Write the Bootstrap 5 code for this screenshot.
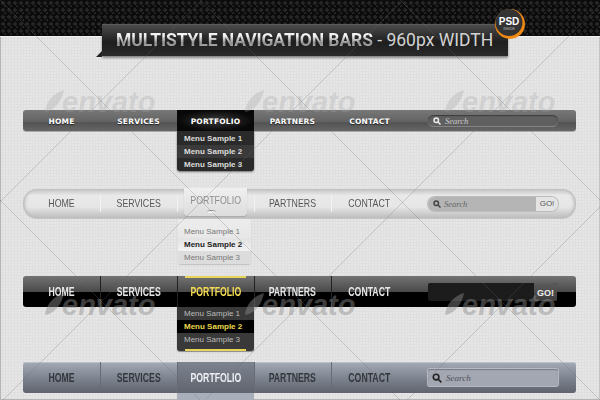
<!DOCTYPE html>
<html lang="en">
<head>
<meta charset="UTF-8">
<title>Multistyle Navigation Bars</title>
<link href="https://cdn.jsdelivr.net/npm/bootstrap@5.3.0/dist/css/bootstrap.min.css" rel="stylesheet">
<style>
html, body { margin: 0; width: 600px; height: 400px; overflow: hidden; }
body { font-family: "Liberation Sans", Arial, sans-serif; background: #e0e0e0; }
.sheet { width: 600px; height: 400px; overflow: hidden;
  background-color: #dfdfdf;
  background-image: radial-gradient(circle at 1px 1px, rgba(255,255,255,.22) 0 1px, transparent 1.2px);
  background-size: 3px 3px;
  box-shadow: inset 1px 0 #b5b5b5, inset -1px 0 #c4c4c4, inset 0 -1px #b5b5b5; }
.top-band { height: 37px; border-bottom: 1px solid #f4f4f4; background-color: #0c0c0c;
  background-image: radial-gradient(circle at 3px 3px, #262626 0 1.5px, transparent 2.1px), radial-gradient(circle at 6px 6.5px, #262626 0 1.5px, transparent 2.1px);
  background-size: 6px 7px; }
.ribbon { width: 406px; height: 32px; margin: -13px 0 54px 102px; background: linear-gradient(#4b4b4b, #1e1e1e 55%, #2a2a2a); border-top: 1px solid #5a5a5a; box-shadow: 0 2px 2px rgba(0,0,0,.4); padding-left: 14px; white-space: nowrap; color: #d4d4d4; font: 17.5px/31px Roboto, sans-serif; }
.ribbon-fold { left: -6px; bottom: -1px; border-top: 6px solid transparent; border-right: 6px solid #222; }
.ribbon-strong { font-weight: 700; letter-spacing: -.08px; background: linear-gradient(#f2f2f2 30%, #8e8e8e 65%, #c2c2c2); -webkit-background-clip: text; background-clip: text; color: transparent; }
.psd-badge { right: -18px; top: -17px; width: 32px; height: 32px; }
.navstack { padding-left: 23px; }
.nav-strip { width: 553px; flex-wrap: nowrap; }
.nav-strip .nav-item { width: 77px; flex: none; }
.nav-strip .nav-link { padding: 0; height: 100%; display: flex; align-items: center; justify-content: center; white-space: nowrap; }
.nav-strip .dropdown-menu { position: absolute; display: block; min-width: 0; padding: 0; margin: 0; border: 0; border-radius: 0 0 3px 3px; z-index: 5; font-size: 8px; left: 0; top: 100%; width: 77px; }
.nav-strip .dropdown-item { height: 13px; line-height: 13px; padding: 0 0 0 7px; font-weight: 700; white-space: nowrap; }
.squeeze { display: inline-block; transform: scaleX(.67); }
.find-slot { flex: 1; display: flex; align-items: center; padding-left: 20px; }
.find-box { width: 130px; display: flex; align-items: center; font: italic 8.5px "Liberation Serif", serif; white-space: nowrap; }
.find-box svg { flex: none; }

.strip-one { height: 21px; margin-bottom: 58px; border-radius: 3px; background: linear-gradient(#787878, #636363 55%, #535353 60%, #666); box-shadow: 0 1px 0 #aaa; }
.strip-one .nav-link { padding-top: 1px; color: #fff; font: 700 7.5px "DejaVu Sans", sans-serif; letter-spacing: .2px; text-shadow: 0 1px 1px #222; }
.strip-one .picked { background: radial-gradient(ellipse at center, #3b3b3b, #080808 70%); }
.strip-one .dropdown-menu { background: #2a2a2a; height: 40px; padding-top: 1px; box-shadow: 0 1px 2px rgba(0,0,0,.5); }
.strip-one .dropdown-item { color: #ddd; }
.strip-one .dropdown-item:nth-child(2) { background: #3a3a3a; }
.strip-one .find-box { height: 11px; padding-left: 5px; gap: 4px; border-radius: 6px; background: #5f5f5f; box-shadow: inset 0 1px 1px #3e3e3e, 0 1px 0 #858585; color: #ccc; }

.strip-two { height: 29px; margin-bottom: 58px; border-radius: 14px; background: linear-gradient(#c2c2c2, #e9e9e9 22%, #e6e6e6 62%, #bdbdbd); box-shadow: inset 3px 0 3px -1px #bbb, inset -3px 0 3px -1px #bbb, 0 1px 0 #c4c4c4; }
.strip-two .nav-item + .nav-item { background: linear-gradient(#f2f2f2, #f2f2f2) left center / 1px 17px no-repeat; }
.strip-two .nav-link { color: #565656; font-size: 11px; }
.strip-two .squeeze { transform: scaleX(.8); }
.strip-two .picked .nav-link { position: absolute; left: 7px; top: -1px; width: 63px; height: 28px; padding-bottom: 4px; color: #8e8e8e; background: linear-gradient(#f0f0f0, #dcdcdc); border-radius: 0 0 4px 4px; box-shadow: 0 1px 1px #aaa; }
.tab-notch { left: 30px; top: 21px; width: 9px; height: 3px; z-index: 2; border-top: 1px solid #999; border-radius: 3px 3px 0 0; background: #f2f2f2; }
.strip-two .dropdown-menu { top: 30px; left: 1px; width: 73px; height: 45px; padding-top: 6px; border-radius: 3px; background: linear-gradient(#ececec, #e2e2e2); box-shadow: 0 1px 1px #c0c0c0; }
.strip-two .dropdown-item { color: #777; font-weight: 400; padding-left: 6px; }
.strip-two .dropdown-item:nth-child(2) { color: #222; font-weight: 700; background: linear-gradient(#e2e2e2, #f2f2f2); }
.strip-two .dropdown-item:nth-child(3) { background: #dcdcdc; }
.strip-two .find-box { height: 14px; padding-left: 5px; gap: 3px; border-radius: 7px; color: #666; overflow: hidden; background: linear-gradient(90deg, #b5b5b5, #b5b5b5 83%, #e4e4e4 83%); box-shadow: 0 0 0 1px #bbb; }
.go-word { margin-left: auto; font: 8px "Liberation Sans", sans-serif; }
.strip-two .go-word { width: 22px; text-align: center; color: #555; }

.strip-three { height: 31px; margin-bottom: 55px; border-radius: 3px; background: linear-gradient(#737373, #4a4a4a 50%, #000 51%); }
.strip-three .nav-item + .nav-item { box-shadow: inset 1px 0 #222; }
.strip-three .nav-link { color: #e8e8e8; font: 700 13px "Liberation Sans", sans-serif; }
.strip-three .picked .nav-link { color: #f5dc52; }
.yellow-cap { position: absolute; left: 8px; width: 61px; height: 2px; background: #e7d55a; }
.cap-high { top: 0; }
.cap-low { bottom: 0; }
.strip-three .dropdown-menu { background: #393939; height: 44px; box-shadow: 0 1px 1px rgba(0,0,0,.4); }
.strip-three .dropdown-item { color: #bbb; font-weight: 400; }
.strip-three .dropdown-item:nth-child(2) { background: #000; color: #eed84e; font-weight: 700; }
.strip-three .find-box { height: 18px; margin-top: 1px; width: 129px; color: transparent; background: #1c1c1c; border-radius: 2px; }
.strip-three .go-word { width: 23px; height: 18px; line-height: 20px; text-align: center; color: #eee; font-weight: 700; font-size: 9px; background: linear-gradient(#5c5c5c, #3c3c3c); border-radius: 0 2px 2px 0; }

.strip-four { height: 31px; border-radius: 3px; background: linear-gradient(#a3a9b5, #7c828d 55%, #5e636c); box-shadow: inset 0 1px #bcc2cc; }
.strip-four .nav-item + .nav-item { box-shadow: inset 1px 0 #666b75; }
.strip-four .nav-link { color: #33363c; font: 700 13px "Liberation Sans", sans-serif; }
.strip-four .picked { background: linear-gradient(#7d838f, #5f646e); }
.strip-four .picked .nav-link { color: #eef0f4; }
.strip-four .dropdown-menu { background: #a8afbb; height: 8px; border-radius: 0; }
.strip-four .find-box { height: 17px; padding-left: 4px; gap: 4px; color: #4e5158; font-size: 9px; background: #a3a7b2; border-radius: 2px; box-shadow: inset 0 1px 1px #777b85, 0 0 0 1px #b5b9c3; }

.stamp-layer { left: 0; top: 0; z-index: 20; pointer-events: none; }
.stamp-word { font: italic 700 29px "Liberation Sans", sans-serif; }
.stamp-light { fill: rgba(165,165,165,.3); }
.stamp-strong { fill: rgba(140,140,140,.45); }
</style>
</head>
<body>
<div class="sheet position-relative">
  <div class="top-band"></div>

  <div class="ribbon position-relative">
    <span class="ribbon-fold position-absolute"></span>
    <span class="ribbon-strong">MULTISTYLE NAVIGATION BARS</span> - 960px WIDTH
    <svg class="psd-badge position-absolute" viewBox="0 0 32 32">
      <circle cx="16" cy="16" r="15" fill="#f08a12"/>
      <circle cx="15" cy="14.5" r="13.5" fill="#333"/>
      <text x="15" y="17" text-anchor="middle" font-family="Liberation Sans" font-weight="700" font-size="10" fill="#fff">PSD</text>
      <text x="15" y="22" text-anchor="middle" font-family="Liberation Sans" font-size="3.5" fill="#bbb">INSIDE</text>
    </svg>
  </div>

  <div class="navstack">
    <ul class="nav nav-strip strip-one">
      <li class="nav-item"><a class="nav-link" href="#">HOME</a></li>
      <li class="nav-item"><a class="nav-link" href="#">SERVICES</a></li>
      <li class="nav-item position-relative picked"><a class="nav-link" href="#">PORTFOLIO</a>
        <div class="dropdown-menu"><a class="dropdown-item" href="#">Menu Sample 1</a><a class="dropdown-item" href="#">Menu Sample 2</a><a class="dropdown-item" href="#">Menu Sample 3</a></div>
      </li>
      <li class="nav-item"><a class="nav-link" href="#">PARTNERS</a></li>
      <li class="nav-item"><a class="nav-link" href="#">CONTACT</a></li>
      <li class="find-slot"><div class="find-box">
        <svg width="8" height="8" viewBox="0 0 16 16" fill="none" stroke="#eee" stroke-width="3"><circle cx="6.5" cy="6.5" r="4.5"/><path d="M10 10l5 5"/></svg>Search</div></li>
    </ul>

    <ul class="nav nav-strip strip-two">
      <li class="nav-item"><a class="nav-link" href="#"><span class="squeeze">HOME</span></a></li>
      <li class="nav-item"><a class="nav-link" href="#"><span class="squeeze">SERVICES</span></a></li>
      <li class="nav-item position-relative picked"><a class="nav-link" href="#"><span class="squeeze">PORTFOLIO</span></a><span class="tab-notch position-absolute"></span>
        <div class="dropdown-menu"><a class="dropdown-item" href="#">Menu Sample 1</a><a class="dropdown-item" href="#">Menu Sample 2</a><a class="dropdown-item" href="#">Menu Sample 3</a></div>
      </li>
      <li class="nav-item"><a class="nav-link" href="#"><span class="squeeze">PARTNERS</span></a></li>
      <li class="nav-item"><a class="nav-link" href="#"><span class="squeeze">CONTACT</span></a></li>
      <li class="find-slot"><div class="find-box">
        <svg width="8" height="8" viewBox="0 0 16 16" fill="none" stroke="#444" stroke-width="3"><circle cx="6.5" cy="6.5" r="4.5"/><path d="M10 10l5 5"/></svg>Search<span class="go-word">GO!</span></div></li>
    </ul>

    <ul class="nav nav-strip strip-three">
      <li class="nav-item"><a class="nav-link" href="#"><span class="squeeze">HOME</span></a></li>
      <li class="nav-item"><a class="nav-link" href="#"><span class="squeeze">SERVICES</span></a></li>
      <li class="nav-item position-relative picked"><span class="yellow-cap cap-high"></span><a class="nav-link" href="#"><span class="squeeze">PORTFOLIO</span></a>
        <div class="dropdown-menu"><a class="dropdown-item" href="#">Menu Sample 1</a><a class="dropdown-item" href="#">Menu Sample 2</a><a class="dropdown-item" href="#">Menu Sample 3</a><span class="yellow-cap cap-low"></span></div>
      </li>
      <li class="nav-item"><a class="nav-link" href="#"><span class="squeeze">PARTNERS</span></a></li>
      <li class="nav-item"><a class="nav-link" href="#"><span class="squeeze">CONTACT</span></a></li>
      <li class="find-slot"><div class="find-box"><span class="go-word">GO!</span></div></li>
    </ul>

    <ul class="nav nav-strip strip-four">
      <li class="nav-item"><a class="nav-link" href="#"><span class="squeeze">HOME</span></a></li>
      <li class="nav-item"><a class="nav-link" href="#"><span class="squeeze">SERVICES</span></a></li>
      <li class="nav-item position-relative picked"><a class="nav-link" href="#"><span class="squeeze">PORTFOLIO</span></a>
        <div class="dropdown-menu"></div>
      </li>
      <li class="nav-item"><a class="nav-link" href="#"><span class="squeeze">PARTNERS</span></a></li>
      <li class="nav-item"><a class="nav-link" href="#"><span class="squeeze">CONTACT</span></a></li>
      <li class="find-slot"><div class="find-box">
        <svg width="10" height="10" viewBox="0 0 16 16" fill="none" stroke="#222" stroke-width="2.6"><circle cx="6.5" cy="6.5" r="4.5"/><path d="M10 10l5 5"/></svg>Search</div></li>
    </ul>
  </div>

  <!-- watermark sits over everything -->
  <svg class="stamp-layer position-absolute" width="600" height="400" fill="none" stroke="rgba(105,105,105,.38)" stroke-width=".7">
    <path d="M0 200L200 400M0 0L400 400M200 0L600 400M400 0L600 200M0 202L202 0M0 403L403 0M205 400L605 0M407 400L600 207"/>
    <g stroke="none">
      <text class="stamp-word stamp-light" x="62" y="112">envato</text><text class="stamp-word stamp-light" x="262" y="112">envato</text><text class="stamp-word stamp-light" x="462" y="112">envato</text>
      <text class="stamp-word stamp-strong" x="62" y="315">envato</text><text class="stamp-word stamp-strong" x="262" y="315">envato</text><text class="stamp-word stamp-strong" x="462" y="315">envato</text>
      <g class="stamp-light">
        <path d="M45 112C46 101 54 93 64 90C62 100 56 110 45 112Z"/>
        <path d="M245 112C246 101 254 93 264 90C262 100 256 110 245 112Z"/>
        <path d="M445 112C446 101 454 93 464 90C462 100 456 110 445 112Z"/>
      </g>
      <g class="stamp-strong">
        <path d="M45 315C46 304 54 296 64 293C62 303 56 313 45 315Z"/>
        <path d="M245 315C246 304 254 296 264 293C262 303 256 313 245 315Z"/>
        <path d="M445 315C446 304 454 296 464 293C462 303 456 313 445 315Z"/>
      </g>
    </g>
  </svg>
</div>
<script src="https://cdn.jsdelivr.net/npm/bootstrap@5.3.0/dist/js/bootstrap.bundle.min.js"></script>
</body>
</html>
